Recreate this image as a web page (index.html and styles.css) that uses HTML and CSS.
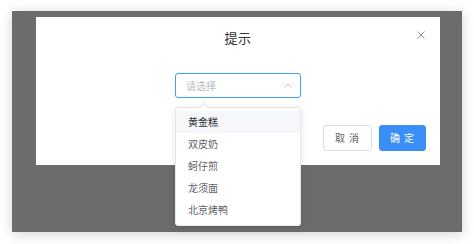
FILE: index.html
```html
<!DOCTYPE html>
<html lang="zh">
<head>
<meta charset="utf-8">
<link rel="stylesheet" href="styles.css">
</head>
<body>
<div class="frame">
  <div class="overlay">
    <div class="dialog">
      <div class="header">
        <span class="spacer"></span>
        <span class="title">提示</span>
        <span class="close">
          <svg width="8" height="8" viewBox="0 0 8 8"><path d="M0.5 0.5L7.5 7.5M7.5 0.5L0.5 7.5" stroke="#909399" stroke-width="1" fill="none"/></svg>
        </span>
      </div>
      <div class="body">
        <div class="select">
          <span class="placeholder">请选择</span>
          <svg class="chev" width="8" height="5" viewBox="0 0 8 5"><path d="M0.5 4.5L4 1L7.5 4.5" stroke="#c0c4cc" stroke-width="1" fill="none"/></svg>
        </div>
      </div>
      <div class="footer">
        <button class="btn">取 消</button>
        <button class="btn primary">确 定</button>
      </div>
    </div>
    <div class="dropdown">
      <span class="arrow"></span>
      <ul class="list">
        <li class="item hover">黄金糕</li>
        <li class="item">双皮奶</li>
        <li class="item">蚵仔煎</li>
        <li class="item">龙须面</li>
        <li class="item">北京烤鸭</li>
      </ul>
    </div>
  </div>
</div>
</body>
</html>
```

FILE: styles.css
```css
* { box-sizing: border-box; }
html, body { margin: 0; padding: 0; background: #fff; }
body {
  width: 474px;
  height: 244px;
  overflow: hidden;
  font-family: "Noto Sans CJK SC", "Noto Sans", sans-serif;
}
.frame {
  padding: 11px 12px;
}
.overlay {
  position: relative;
  width: 450px;
  height: 221px;
  background: #6c6c6c;
  padding: 6px 0 0 24px;
  box-shadow: 0 2px 12px rgba(0, 0, 0, 0.18);
}
.dialog {
  width: 404px;
  height: 148px;
  background: #fff;
  display: flex;
  flex-direction: column;
}
.header {
  height: 42px;
  display: grid;
  grid-template-columns: 1fr auto 1fr;
  align-items: center;
  padding: 0 15px;
}
.title {
  font-size: 13px;
  line-height: 16px;
  color: #303133;
  letter-spacing: 0.5px;
}
.close {
  justify-self: end;
  align-self: start;
  margin-top: 14px;
  width: 8px;
  height: 8px;
  display: flex;
}
.body {
  padding-top: 14px;
  display: flex;
  justify-content: center;
}
.select {
  width: 126px;
  height: 25px;
  border: 1px solid #409eff;
  border-radius: 3px;
  display: flex;
  align-items: center;
  justify-content: space-between;
  padding: 0 8px 0 10px;
}
.placeholder {
  font-size: 10px;
  color: #b8bcc4;
}
.chev { display: block; }
.footer {
  margin-top: 27px;
  display: flex;
  justify-content: flex-end;
  gap: 7px;
  padding-right: 14px;
}
.btn {
  height: 26px;
  width: 49px;
  border: 1px solid #dcdfe6;
  border-radius: 3px;
  background: #fff;
  color: #606266;
  font-family: inherit;
  font-size: 10px;
  letter-spacing: 1px;
  padding: 0;
  line-height: 1;
}
.btn.primary {
  width: 47px;
  background: #3a8ef6;
  border-color: #3a8ef6;
  color: #fff;
}
.dropdown {
  position: absolute;
  left: 163px;
  top: 96px;
  width: 126px;
  background: #fff;
  border: 1px solid #e4e7ed;
  border-radius: 3px;
  box-shadow: 0 2px 8px rgba(0, 0, 0, 0.1);
}
.arrow {
  position: absolute;
  left: 24px;
  top: -4px;
  width: 7px;
  height: 7px;
  background: #fff;
  border-left: 1px solid #e4e7ed;
  border-top: 1px solid #e4e7ed;
  transform: rotate(45deg);
}
.list {
  list-style: none;
  margin: 0;
  padding: 3px 0 4px;
}
.item {
  height: 22px;
  line-height: 22px;
  padding-left: 12px;
  font-size: 10px;
  color: #606266;
}
.item.hover {
  background: #f5f7fa;
  color: #303133;
}
```
